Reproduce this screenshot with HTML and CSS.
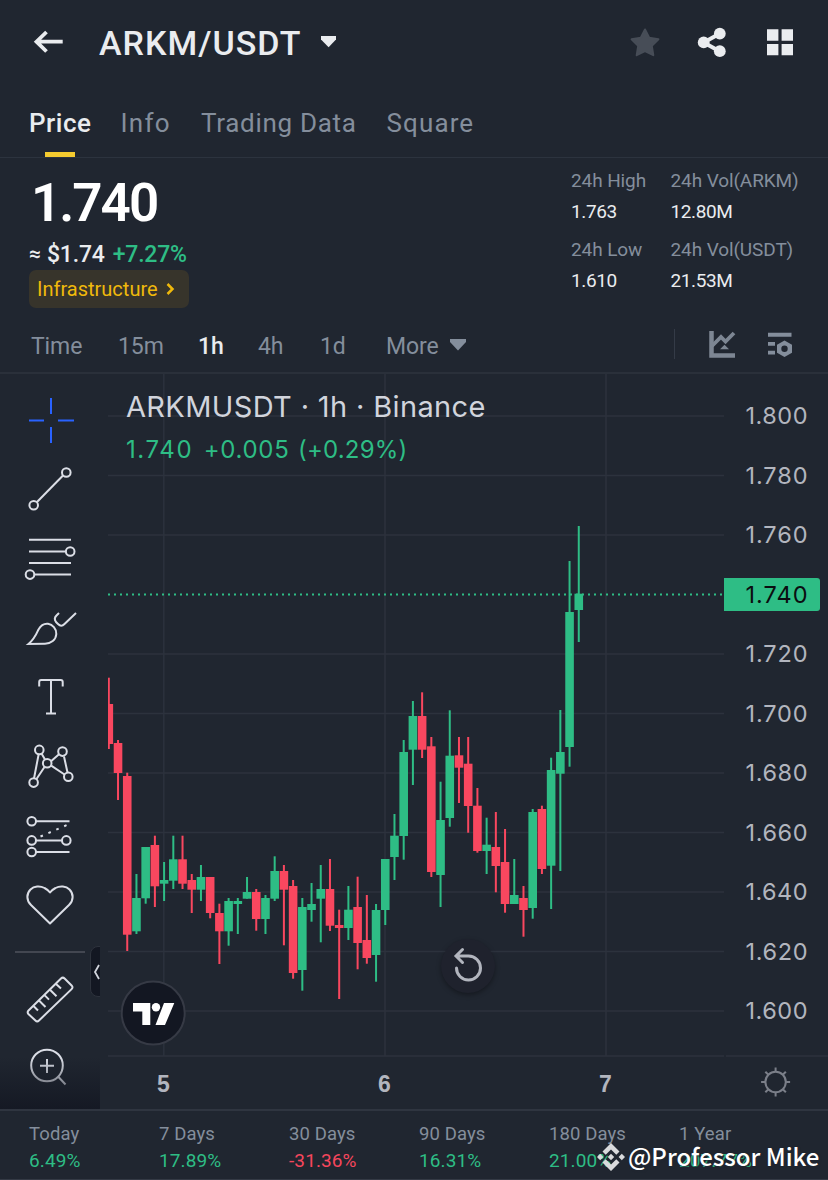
FILE: index.html
```html
<!DOCTYPE html>
<html lang="en">
<head>
<meta charset="utf-8">
<title>ARKM/USDT</title>
<link rel="stylesheet" href="styles.css">
</head>
<body>
<div class="app">
  <header class="topbar">
    <svg class="back" width="32" height="26" viewBox="32 29 32 26"><path d="M46.500 32L36.500 41.700L46.500 51.500M36.500 41.700H62.700" fill="none" stroke="#eaecef" stroke-width="3.800"/></svg>
    <h1 class="pair">ARKM/USDT</h1>
    <svg class="caret" width="18" height="14" viewBox="320 34 18 14"><path d="M321 36h15v3.500L328.600 47.300L321 39.500z" fill="#eaecef"/></svg>
    <div class="actions">
      <svg width="32" height="32" viewBox="628 26 32 32"><path d="M645 29.500l4.200 8.300 9.200 1.500-6.600 6.600 1.500 9.300-8.300-4.200-8.300 4.200 1.500-9.300-6.600-6.600 9.200-1.500z" fill="#474d57" stroke="#474d57" stroke-width="2" stroke-linejoin="round"/></svg>
      <svg width="32" height="32" viewBox="696 26 32 32"><path d="M719.500 33.700L703.700 42.500L719.500 51.300" fill="none" stroke="#eaecef" stroke-width="4"/><g fill="#eaecef"><circle cx="719.800" cy="33.700" r="5.900"/><circle cx="703.700" cy="42.400" r="5.900"/><circle cx="719.800" cy="51.200" r="5.900"/></g></svg>
      <svg width="32" height="32" viewBox="764 26 32 32"><path d="M767 29.300h11.400v11.400H767zM781.600 29.300H793v11.400h-11.400zM767 43.900h11.400v11.400H767zM781.600 43.900H793v11.400h-11.400z" fill="#eaecef"/></svg>
    </div>
  </header>

  <nav class="tabs">
    <a class="tab active">Price</a><a class="tab info">Info</a><a class="tab">Trading Data</a><a class="tab square">Square</a>
  </nav>

  <section class="summary">
    <div class="quote">
      <div class="last">1.740</div>
      <div class="fiat"><span class="approx">≈</span><span>$1.74</span><span class="up">+7.27%</span></div>
      <a class="tag">Infrastructure<svg width="9" height="12" viewBox="0 0 9 12"><path d="M1.500 1L6.500 6L1.500 11" fill="none" stroke="#f0b90b" stroke-width="2.500"/></svg></a>
    </div>
    <dl class="stats">
      <div><dt>24h High</dt><dd>1.763</dd></div>
      <div><dt>24h Vol(ARKM)</dt><dd>12.80M</dd></div>
      <div><dt>24h Low</dt><dd>1.610</dd></div>
      <div><dt>24h Vol(USDT)</dt><dd>21.53M</dd></div>
    </dl>
  </section>

  <div class="intervals">
    <div class="ranges"><span>Time</span><span>15m</span><span class="on">1h</span><span>4h</span><span>1d</span><span class="more">More<svg width="17" height="13" viewBox="449 338 17 13"><path d="M450 339h16v3l-8 8.500-8-8.500z" fill="#848e9c"/></svg></span></div>
    <div class="tools">
      <svg width="28" height="28" viewBox="708 330 28 28"><path d="M711.500 331v24.500H735" fill="none" stroke="#7d8693" stroke-width="4.500"/><path d="M712 346l9-9 4.500 4.500 8.500-8.500" fill="none" stroke="#7d8693" stroke-width="3.800"/><path d="M720 349.300l4.500-4.500 4.500 4.500z" fill="#7d8693"/></svg>
      <svg width="28" height="28" viewBox="766 330 28 28"><path d="M768 332.700h23.500v4H768zM768 342h7v3.800h-7zM768 350.700h7v3.800h-7z" fill="#848e9c"/><path fill-rule="evenodd" d="M784.500 340.500l7.500 4.200v8l-7.500 4.200-7.500-4.200v-8zm0 5a3.200 3.200 0 1 0 0 6.400a3.200 3.200 0 1 0 0-6.400z" fill="#848e9c"/></svg>
    </div>
  </div>

  <main class="chart">
    <aside class="toolbar">
      <svg height="69" viewBox="0 386 100 69"><path d="M51 398v16M51 427v16M29 420.500h15M58 420.500h16" stroke="#2962ff" stroke-width="2"/></svg>
      <svg height="69" viewBox="0 455 100 69"><path d="M37 502L63 475.500"/><circle cx="33.700" cy="505.300" r="4.300"/><circle cx="66.300" cy="472.500" r="4.300"/></svg>
      <svg height="69" viewBox="0 524 100 69"><path d="M29 539.700h42M29 551.500h37M29 563h42M34 574.600h37"/><circle cx="70.200" cy="551.500" r="4.300"/><circle cx="30" cy="574.600" r="4.300"/></svg>
      <svg height="69" viewBox="0 593 100 69"><path d="M28.500 644C34.500 639 36.500 634 38.500 629.500C41 625 44.500 623.300 48 623.700C52.500 624.500 56.500 628.500 56.300 634C56 640 51 643.700 45 643.700zM59 613l-2.500 2.500c-2 2-2 4.500-.5 6.500l2 2c2.500 2.500 4.500 2 6.500 0L76 613"/></svg>
      <svg height="69" viewBox="0 662 100 69"><path d="M39.200 686.500V682q0-2 2-2h19.500q2 0 2 2v4.500M51 680v33.200M46 713.500h10"/></svg>
      <svg height="69" viewBox="0 731 100 69"><path d="M38.700 754L34 778.500M36.500 779L44.500 767M51 761.300L59 754.300M51.200 765.700L64.500 774.500M64 756.500L67.500 772.500M41.500 753.500L45 759.500"/><circle cx="39.300" cy="749.900" r="4.300"/><circle cx="62.500" cy="751.600" r="4.300"/><circle cx="47.200" cy="763.300" r="4.300"/><circle cx="33.600" cy="782.600" r="4.300"/><circle cx="68.300" cy="776.700" r="4.300"/></svg>
      <svg height="70" viewBox="0 800 100 70"><path d="M36 821.300h33.500M36 840.400h26M36 852h33.500"/><circle cx="31.700" cy="821.300" r="4.300"/><circle cx="31.700" cy="840.400" r="4.300"/><circle cx="66.300" cy="840.400" r="4.300"/><circle cx="31.700" cy="852" r="4.300"/><path d="M40.500 836.500L67 825" stroke-dasharray="2.600 6"/></svg>
      <svg height="70" viewBox="0 870 100 70"><path d="M50 923.500L31 905C26 900 26.500 893.500 30.500 889.500C34 886 40 885.500 44.500 888C47 889.300 49 891 50 892.500C51 891 53 889.300 55.500 888C60 885.500 66 886 69.500 889.500C73.500 893.500 74 900 69 905z" stroke-linejoin="round"/></svg>
      <div class="rule"></div>
      <svg height="70" viewBox="0 964 100 70"><path d="M28.500 1010.500L61 978.500q1.800-1.800 3.600 0l7 7q1.800 1.800 0 3.600L39 1020.500q-1.800 1.800-3.600 0l-7-6.500q-1.500-1.800.1-3.500zM33 1005.500l5 5M38.500 1000l7 7M44 994.600l5 5M49.500 989.200l7 7M55.500 983.500l5.500 5"/></svg>
      <svg height="75" viewBox="0 1034 100 75"><circle cx="47" cy="1065.500" r="15.800"/><path d="M40 1065.800h14M47 1059v14M58.500 1077L65.500 1084.500"/></svg>
      <div class="fade"></div>
      <div class="collapse"><svg width="9" height="16" viewBox="0 0 9 16"><path d="M7 1L3 8l4 7" fill="none" stroke="#d1d4dc" stroke-width="1.800"/></svg></div>
    </aside>
    <div class="plot">
      <svg id="candles" class="canvas" width="720" height="735" viewBox="108 374 720 735"></svg>
      <div class="legend"><div class="symbol">ARKMUSDT · 1h · Binance</div><div class="change"><span class="now">1.740</span><span>+0.005</span><span class="pct">(+0.29%)</span></div></div>
      <svg class="tv" width="66" height="66" viewBox="120 980 66 66"><circle cx="153.200" cy="1013" r="31.500" fill="#131722" stroke="#363a45" stroke-width="2"/><path d="M133 1003h17.300v22H142.300v-13.500H133zM164 1003h10.300l-9.300 22h-9.500z" fill="#fff"/><circle cx="156" cy="1007.200" r="4.200" fill="#fff"/></svg>
      <div class="reset"><svg width="34" height="36" viewBox="0 1 34 36"><path d="M6 10h11.500a12 12 0 1 1-12 12M11.500 3.500L5 10l6.500 6.500" fill="none" stroke="#b2b5be" stroke-width="3" stroke-linecap="round"/></svg></div>
    </div>
  </main>

  <footer class="periods">
    <div><span>Today</span><b>6.49%</b></div>
    <div><span>7 Days</span><b>17.89%</b></div>
    <div><span>30 Days</span><b class="down">-31.36%</b></div>
    <div><span>90 Days</span><b>16.31%</b></div>
    <div><span>180 Days</span><b>21.00%</b></div>
    <div><span>1 Year</span><b>207.77%</b></div>
    <div class="credit"><svg width="28" height="28" viewBox="0 0 28 28"><g fill="#d9dadc"><path d="M14 0l8.500 8.500-3.200 3.200L14 6.400l-5.300 5.300-3.200-3.200zM14 28l8.500-8.500-3.200-3.200L14 21.600l-5.300-5.300-3.200 3.200zM14 10.800l3.200 3.200-3.200 3.200-3.200-3.200zM3.200 10.800L6.400 14l-3.200 3.200L0 14zM24.800 10.800L28 14l-3.200 3.200-3.200-3.200z"/></g></svg><span>@Professor Mike</span></div>
  </footer>
</div>
<script src="chart.js"></script>
</body>
</html>
```
FILE: styles.css
```css
* { box-sizing: border-box; }
body { margin: 0; background: #202630; color: #eaecef; font-family: Roboto, "Liberation Sans", sans-serif; }
svg { display: block; flex: none; }
.app { width: 828px; height: 1180px; display: flex; flex-direction: column; overflow: hidden; }

.topbar { height: 86px; padding: 0 32px; display: flex; align-items: center; flex: none; }
.back { margin-top: -2px; }
.pair { margin: -1px 0 0 35px; width: 221px; font-size: 34px; font-weight: 500; letter-spacing: 1px; line-height: 40px; white-space: nowrap; }
.caret { margin-top: -4px; }
.actions { margin-left: auto; display: flex; gap: 36px; margin-top: -2px; }

.tabs { height: 72px; flex: none; padding: 17px 30px 0 29px; display: flex; gap: 30px; border-bottom: 1px solid #2c333e; }
.tab { position: relative; height: 54px; font-size: 26px; line-height: 40px; font-weight: 400; letter-spacing: .7px; color: #848e9c; white-space: nowrap; }
.tab.info { letter-spacing: 1.300px; margin-left: -1px; }
.tab.square { letter-spacing: 1.100px; }
.tab.active { color: #eaecef; font-weight: 500; letter-spacing: .5px; }
.tab.active::after { content: ""; position: absolute; left: 16px; bottom: 0; width: 30px; height: 5px; background: #f5cb2f; }

.summary { height: 158px; flex: none; padding: 14px 29px 0; display: flex; justify-content: space-between; }
.last { height: 64px; padding-left: 2px; color: #fff; font-size: 53px; line-height: 62px; font-weight: 600; letter-spacing: -2px; }
.fiat { height: 34px; display: flex; font-size: 23px; font-weight: 500; line-height: 37px; letter-spacing: -.2px; }
.approx { width: 18px; font-size: 21px; letter-spacing: 0; }
.up { margin-left: 8px; color: #2ebd85; }
.tag { width: 160px; height: 38px; padding-left: 8px; display: flex; align-items: center; gap: 8px; border-radius: 7px; background: #37342b; color: #f0b90b; font-size: 20px; letter-spacing: 0; }
.stats { width: 228px; margin: 0; display: grid; grid-template-columns: 99.500px 1fr; grid-auto-rows: 69px; }
.stats dt { color: #848e9c; font-size: 19px; line-height: 18px; letter-spacing: -.1px; white-space: nowrap; }
.stats dd { margin: 13px 0 0; font-size: 19px; line-height: 18px; letter-spacing: -.4px; }

.intervals { height: 58px; flex: none; display: flex; justify-content: space-between; align-items: center; padding: 0 34px 0 31px; border-bottom: 2px solid #2a303a; }
.ranges { display: grid; grid-template-columns: 87px 80px 60px 62px 66px auto; padding-top: 4px; font-size: 23px; letter-spacing: -.1px; color: #848e9c; }
.on { color: #eaecef; font-weight: 500; }
.more { display: flex; align-items: center; gap: 10px; }
.more svg { margin-top: -3px; }
.tools { display: flex; align-items: center; gap: 30px; height: 30px; padding-left: 33px; border-left: 1px solid #343b47; }

.chart { height: 735px; flex: none; display: flex; }
.toolbar { position: relative; width: 100px; padding-top: 12px; flex: none; overflow: hidden; }
.toolbar > svg { width: 100px; fill: none; stroke: #dbdee6; stroke-width: 2; }
.rule { height: 24px; display: flex; align-items: center; }
.rule::before { content: ""; width: 70px; height: 2px; margin-left: 15px; background: #434751; }
.fade { position: absolute; inset: auto 0 0; height: 52px; background: linear-gradient(transparent, rgba(19, 23, 34, .85)); }
.collapse { position: absolute; right: -8px; top: 572px; width: 18px; height: 51px; border-radius: 8px; border: 1px solid #2d323c; background: #131722; display: flex; align-items: center; padding-left: 1px; }
.plot { position: relative; width: 720px; margin-left: 8px; }
.legend { position: absolute; left: 18px; top: 14px; font-family: Inter, "Liberation Sans", sans-serif; white-space: nowrap; }
.symbol { height: 38px; font-size: 29px; line-height: 38px; letter-spacing: .35px; color: #d1d4dc; }
.change { display: flex; gap: 10.500px; margin-top: 5px; font-size: 24px; line-height: 38px; letter-spacing: .7px; color: #2ebd85; }
.change .now { letter-spacing: 1.600px; }
.change .pct { margin-left: -2px; letter-spacing: .2px; }
.tv { position: absolute; left: 12px; top: 606px; }
.reset { position: absolute; left: 333px; top: 565px; width: 54px; height: 54px; border-radius: 50%; background: #1f222d; box-shadow: 0 2px 5px rgba(0, 0, 0, .35); display: grid; place-items: center; }
.reset svg { margin: -2px 0 0 -1px; }
.grid { stroke: #2c323d; stroke-width: 1.500; }
.scale { font: 23.500px Inter, sans-serif; fill: #b2b5be; }
.day { font: 700 23px "Liberation Sans", sans-serif; fill: #b2b5be; text-anchor: middle; }
.rise { fill: #2ebd85; }
.fall { fill: #f9475f; }

.periods { position: relative; height: 71px; flex: none; display: grid; grid-template-columns: repeat(6, 130px); padding: 10px 0 0 29px; border-top: 2px solid #2f3540; border-bottom: 1px solid #343a45; white-space: nowrap; }
.periods > div { display: flex; flex-direction: column; }
.periods span { color: #848e9c; font-size: 18.500px; line-height: 26px; letter-spacing: .1px; }
.periods b { color: #2ebd85; font-size: 19px; font-weight: 400; line-height: 28px; letter-spacing: .1px; }
.periods b.down { color: #f6465d; }
.periods .credit { position: absolute; left: 597px; top: 28px; flex-direction: row; align-items: center; gap: 3px; }
.periods .credit span { margin-top: -1px; color: #fff; font: 500 24px/36px "Noto Sans CJK SC", sans-serif; letter-spacing: 0; text-shadow: 1px 1px 2px #202630; }
```
FILE: chart.js
```js
// Each row: direction, wick top, body top, body bottom, wick bottom.
const candles = [
  [0,677.7,704,744,749],[0,740,743,773,800],[0,772.7,776,934.7,951],[1,874,898,931.3,934],
  [1,847,847,898.3,903.7],[0,835.7,845,886.3,907],[1,862,880,883.7,901],[1,835.7,859.3,880.7,889],
  [0,835.7,859.3,883.7,889],[0,874,880,889.7,913],[1,865,877,889.7,901],[0,877,877,913,918.3],
  [0,903.7,913,931.3,964],[1,898,901,931.3,945.7],[1,898,901,904,934],[1,877,892,898.7,898.7],
  [0,889,892,919,930.7],[1,895,898,919,934],[1,856.3,871,898.7,901],[0,865,871,889.7,945.3],
  [0,880,886,973,978.7],[1,898,907,970,990.7],[1,883,904,910,921.7],[1,865,889,898.7,942.3],
  [0,859,889,925.7,931],[0,909.7,925,928,999],[1,886,909.7,928,940],[0,876.7,907,943,969.3],
  [0,895,940,958,963.7],[1,904,910,955,981.7],[1,859,859,910,925],[1,814,835.7,857,880],
  [1,740,752,836,859.7],[1,701,716,749.7,785],[0,692.3,716,749.7,758],[0,737,746.3,872,877],
  [1,781.7,820,875,907],[1,710.3,755.7,818,826.7],[0,737,755.3,767.7,803],[0,737,763.7,806,832.7],
  [0,788,805.7,851,852.7],[1,817.7,844.7,851,874],[0,812,847,866,892.3],[0,829,862,904,912.7],
  [1,859,895,904,904],[0,886,898,910,936.7],[1,809,812,908,918.7],[0,805.7,809,869,874],
  [1,757.7,770,865.7,909],[1,710,752,773.7,871],[1,561,612,747,766.7],[1,526,593.7,610,642]
];
let out = '';
const prices = ['1.800','1.780','1.760','1.740','1.720','1.700','1.680','1.660','1.640','1.620','1.600'];
[[163.8,'5'],[385,'6'],[606,'7']].forEach(([x, day]) => {
  out += `<path class="grid" d="M${x} 374V1056"/><text class="day" x="${x - 0.5}" y="1092">${day}</text>`;
});
prices.forEach((p, i) => {
  const y = 416 + i * 59.5;
  if (i === 3) {
    out += `<path d="M108 594.5H724" stroke="#2ebd85" stroke-width="2" stroke-dasharray="2 4"/>
      <path d="M724 578h93q3 0 3 3v27q0 3-3 3h-93z" fill="#2ebd85"/>`;
  } else {
    out += `<path class="grid" d="M108 ${y}H724"/>`;
  }
  out += `<text class="scale" x="745.5" y="${y + 8}" textLength="62"${i === 3 ? ' style="fill:#0b0e11"' : ''}>${p}</text>`;
});
out += '<path class="grid" d="M108 1056H724M726 1056H828"/>';
candles.forEach(([up, high, top, bottom, low], i) => {
  const x = 164.1 + (i - 6) * 9.215;
  const left = Math.max(108, x - 4.3);
  out += `<g class="${up ? 'rise' : 'fall'}"><rect x="${x - 1}" y="${high}" width="2" height="${low - high}"/>
    <rect x="${left}" y="${top}" width="${x + 4.3 - left}" height="${bottom - top}"/></g>`;
});
let rays = '';
for (let a = 0; a < 360; a += 45) rays += `<path d="M0-10.500V-14.500" transform="rotate(${a})"/>`;
out += `<g transform="translate(775.600 1082)" fill="none" stroke="#7b7f89" stroke-width="2"><circle r="10.200"/>${rays}</g>`;
document.getElementById('candles').innerHTML = out;
```
